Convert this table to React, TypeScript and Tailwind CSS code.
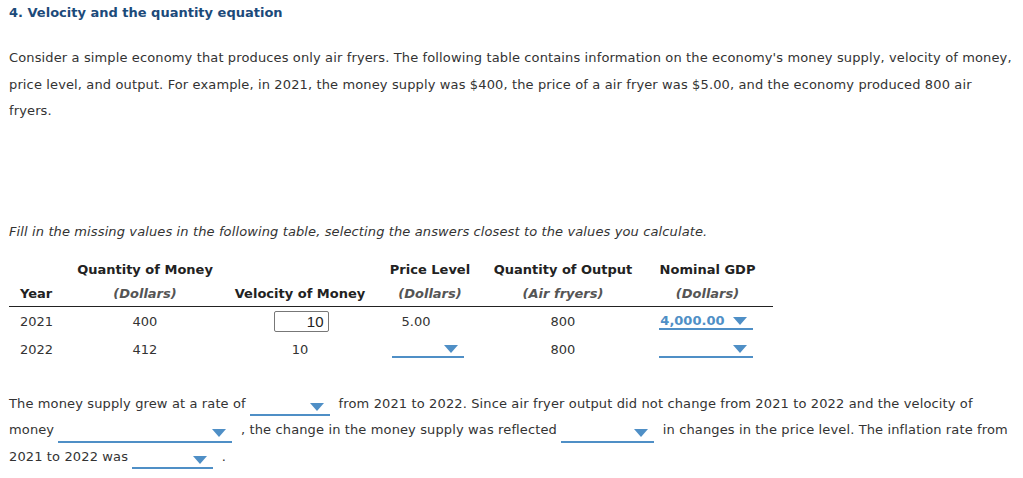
import React from "react";

const Caret = () => (
  <svg width="14" height="8" viewBox="0 0 14 8" className="shrink-0">
    <polygon points="0,0 14,0 7,8" fill="#4f8fc6" />
  </svg>
);

const Dropdown = ({ width, value }: { width: number; value?: string }) => (
  <span
    className="inline-flex items-center justify-end gap-[8px] border-b-2 border-[#4f8fc6] h-[17px] align-[-3px] pr-[6px] tracking-normal"
    style={{ width }}
  >
    {value && <span className="font-bold text-[#4f8fc6] leading-none">{value}</span>}
    <Caret />
  </span>
);

const cols = "grid grid-cols-[57px_158px_152px_108px_158px_131px]";

const App = () => {
  return (
    <div className="w-[1023px] h-[478px] bg-white text-[13px] text-[#333] px-[9px] pt-[6px] font-['Verdana','DejaVu_Sans',sans-serif]">
      <h2 className="font-bold text-[#1c4a7a] leading-[14px]">4. Velocity and the quantity equation</h2>

      <p className="mt-[25px] leading-[26.5px] tracking-[0.13px]">
        Consider a simple economy that produces only air fryers. The following table contains information on the economy's money supply, velocity of money, price level, and output. For example, in 2021, the money supply was $400, the price of a air fryer was $5.00, and the economy produced 800 air fryers.
      </p>

      <p className="mt-[94px] italic leading-[26px] tracking-[0.12px]">
        Fill in the missing values in the following table, selecting the answers closest to the values you calculate.
      </p>

      <div className="mt-[13px] w-[764px]">
        <div className={`${cols} items-end font-bold text-[#222] leading-[24px]`}>
          <div className="pl-[11px] self-end">Year</div>
          <div className="text-center">
            <div>Quantity of Money</div>
            <div className="italic text-[#555]">(Dollars)</div>
          </div>
          <div className="text-center">Velocity of Money</div>
          <div className="text-center">
            <div>Price Level</div>
            <div className="italic text-[#555]">(Dollars)</div>
          </div>
          <div className="text-center">
            <div>Quantity of Output</div>
            <div className="italic text-[#555]">(Air fryers)</div>
          </div>
          <div className="text-center">
            <div>Nominal GDP</div>
            <div className="italic text-[#555]">(Dollars)</div>
          </div>
        </div>
        <div className="h-[1px] bg-[#222]" />

        <div className={`${cols} items-center h-[28px] mt-[1px]`}>
          <div className="pl-[11px]">2021</div>
          <div className="text-center">400</div>
          <div className="flex justify-center">
            <div className="w-[55px] h-[21px] border border-[#777] rounded-[2px] text-right pr-[4px] text-[15px] leading-[19px] text-[#222] font-['Liberation_Sans',Arial,sans-serif] ml-[2px]">
              10
            </div>
          </div>
          <div className="text-center pr-[28px]">5.00</div>
          <div className="text-center">800</div>
          <div className="flex justify-center pr-[4px]">
            <Dropdown width={94} value="4,000.00" />
          </div>
        </div>

        <div className={`${cols} items-center h-[28px]`}>
          <div className="pl-[11px]">2022</div>
          <div className="text-center">412</div>
          <div className="text-center">10</div>
          <div className="flex justify-center pr-[4px]">
            <Dropdown width={72} />
          </div>
          <div className="text-center">800</div>
          <div className="flex justify-center pr-[4px]">
            <Dropdown width={94} />
          </div>
        </div>
      </div>

      <p className="mt-[27px] leading-[26.5px] tracking-[0.13px]">
        The money supply grew at a rate of <Dropdown width={80} />&nbsp; from 2021 to 2022. Since air fryer output did not change from 2021 to 2022 and the velocity of money <Dropdown width={174} />&nbsp; , the change in the money supply was reflected <Dropdown width={93} />&nbsp; in changes in the price level. The inflation rate from 2021 to 2022 was <Dropdown width={81} />&nbsp; .
      </p>
    </div>
  );
};

export default App;
